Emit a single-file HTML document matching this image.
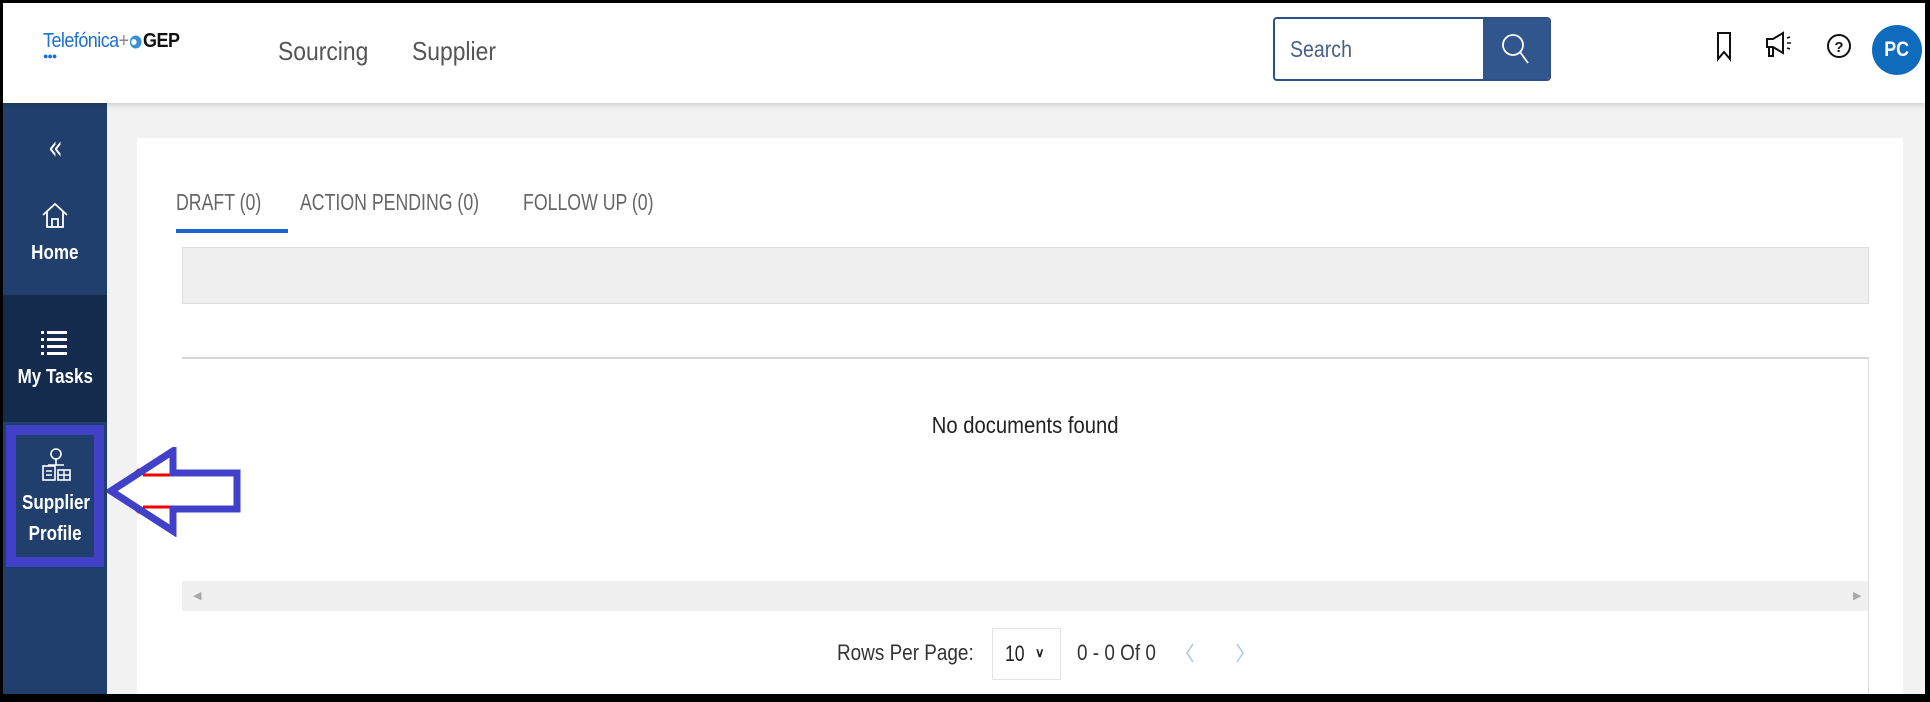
<!DOCTYPE html>
<html><head><meta charset="utf-8"><style>
*{margin:0;padding:0;box-sizing:border-box}
body{width:1930px;height:702px;overflow:hidden;background:#000;font-family:"Liberation Sans",sans-serif;position:relative}
.frame{position:absolute;left:3px;top:3px;width:1922px;height:691px;background:#f2f2f2;overflow:hidden}
.hdr{position:absolute;left:0;top:0;width:100%;height:100px;background:#fff;box-shadow:0 2px 5px rgba(0,0,0,.15);z-index:2}
.abs{position:absolute}
.n{display:inline-block;transform:scaleX(.8);transform-origin:left center;white-space:nowrap}
.nc{display:inline-block;transform:scaleX(.85);transform-origin:center center;white-space:nowrap}
.side{position:absolute;left:0;top:100px;width:104px;height:591px;background:#203f6c}
.card{position:absolute;left:134px;top:135px;width:1766px;height:556px;background:#fff}
</style></head><body><div class="frame">
<div class="hdr">
 <div class="abs" style="left:40px;top:27px;font-size:20px;color:#1d6fd1;letter-spacing:-0.6px"><span class="n" style="transform:scaleX(.9)">Telefónica<span style="color:#888">+</span><svg width="16" height="15" style="vertical-align:-2px"><circle cx="8" cy="8" r="6.5" fill="#3a8fd6"/><circle cx="6" cy="8" r="3" fill="#fff"/></svg><b style="color:#111">GEP</b></span></div>
 <div class="abs" style="left:40px;top:48px;font-size:9px;color:#1d6fd1;letter-spacing:-1px">●●●</div>
 <div class="abs" style="left:275px;top:33px;font-size:26px;color:#555"><span class="n" style="transform:scaleX(.88)">Sourcing</span></div>
 <div class="abs" style="left:409px;top:33px;font-size:26px;color:#555"><span class="n" style="transform:scaleX(.88)">Supplier</span></div>
 <div class="abs" style="left:1270px;top:14px;width:278px;height:64px;border:2px solid #2f5085;border-radius:4px;background:#fff;overflow:hidden">
  <div class="abs" style="left:15px;top:17px;font-size:23px;color:#4a5f86"><span class="n" style="transform:scaleX(.85)">Search</span></div>
  <div class="abs" style="right:0;top:0;width:66px;height:62px;background:#31568e">
   <svg width="66" height="62"><circle cx="30" cy="26" r="10" fill="none" stroke="#fff" stroke-width="1.8"/><line x1="37" y1="33" x2="45" y2="44" stroke="#fff" stroke-width="1.8"/></svg>
  </div>
 </div>
 <svg class="abs" style="left:1705px;top:25px" width="30" height="36"><path d="M10 5 h12 v26 l-6 -7 l-6 7 z" fill="none" stroke="#111" stroke-width="2"/></svg>
 <svg class="abs" style="left:1758px;top:25px" width="36" height="36"><path d="M6 11 h6 l10 -6 v20 l-10 -6 h-6 z M8 19 v9 h4 v-9" fill="none" stroke="#111" stroke-width="2"/><path d="M26 10 l3 -1 M26 15 h4 M26 20 l3 1" stroke="#111" stroke-width="1.6"/></svg>
 <svg class="abs" style="left:1822px;top:29px" width="30" height="30"><circle cx="14" cy="14" r="11" fill="none" stroke="#111" stroke-width="2"/><text x="14" y="20" text-anchor="middle" font-family="Liberation Sans" font-weight="bold" font-size="15" fill="#111">?</text></svg>
 <div class="abs" style="left:1869px;top:22px;width:50px;height:50px;border-radius:50%;background:#0f6cbd;color:#fff;font-weight:bold;font-size:21px;line-height:50px;text-align:center"><span class="nc">PC</span></div>
</div>
<div class="side">
 <div class="abs" style="left:0;width:104px;text-align:center;top:25px;font-size:34px;color:#fff;font-family:'DejaVu Sans'"><span class="nc" style="transform:scaleX(.7)">«</span></div>
 <svg class="abs" style="left:37px;top:98px" width="30" height="30"><path d="M3 14 L15 3 L27 14 M7 11 v15 h16 v-15 M12 26 v-8 h6 v8" fill="none" stroke="#fff" stroke-width="1.8"/></svg>
 <div class="abs" style="left:0;width:104px;top:139px;text-align:center;color:#fff;font-size:20px;font-weight:bold"><span class="nc">Home</span></div>
 <div class="abs" style="left:0;top:192px;width:104px;height:127px;background:#152b4d">
  <svg class="abs" style="left:38px;top:34px" width="30" height="26"><g fill="#fff"><rect x="0" y="2" width="3" height="3"/><rect x="6" y="2" width="20" height="3"/><rect x="0" y="9" width="3" height="3"/><rect x="6" y="9" width="20" height="3"/><rect x="0" y="16" width="3" height="3"/><rect x="6" y="16" width="20" height="3"/><rect x="0" y="23" width="3" height="3"/><rect x="6" y="23" width="20" height="3"/></g></svg>
  <div class="abs" style="left:0;width:104px;top:71px;text-align:center;color:#fff;font-size:20px;font-weight:bold"><span class="nc">My Tasks</span></div>
 </div>
 <div class="abs" style="left:3px;top:322px;width:98px;height:142px;border:10px solid #4040c8;background:#203f6c">
  <svg class="abs" style="left:24px;top:12px" width="34" height="36"><circle cx="16" cy="7" r="5" fill="none" stroke="#fff" stroke-width="1.6"/><path d="M8 18 h16 M16 12 v6" stroke="#fff" stroke-width="1.6"/><rect x="3" y="19" width="12" height="14" fill="none" stroke="#fff" stroke-width="1.6"/><path d="M6 24 h6 M6 28 h6" stroke="#fff" stroke-width="1.4"/><rect x="18" y="23" width="12" height="10" fill="none" stroke="#fff" stroke-width="1.6"/><path d="M24 23 v10 M18 28 h12" stroke="#fff" stroke-width="1.4"/></svg>
  <div class="abs" style="left:0;width:78px;top:53px;text-align:center;color:#fff;font-size:20px;font-weight:bold;line-height:31px"><span class="nc">Supplier</span><br><span class="nc">Profile</span></div>
 </div>
</div>
<div class="card">
 <div class="abs" style="left:39px;top:51px;font-size:23px;color:#666"><span class="n" style="transform:scaleX(.77)">DRAFT (0)</span></div>
 <div class="abs" style="left:163px;top:51px;font-size:23px;color:#666"><span class="n" style="transform:scaleX(.77)">ACTION PENDING (0)</span></div>
 <div class="abs" style="left:386px;top:51px;font-size:23px;color:#666"><span class="n" style="transform:scaleX(.77)">FOLLOW UP (0)</span></div>
 <div class="abs" style="left:39px;top:91px;width:112px;height:4px;background:#1e62d0"></div>
 <div class="abs" style="left:45px;top:109px;width:1687px;height:57px;background:#efefef;border:1px solid #ddd"></div>
 <div class="abs" style="left:45px;top:219px;width:1687px;height:400px;border-top:2px solid #d6d6d6;border-right:1px solid #ddd"></div>
 <div class="abs" style="left:45px;top:274px;width:1687px;text-align:center;font-size:23px;color:#222"><span class="nc" style="transform:scaleX(.88)">No documents found</span></div>
 <div class="abs" style="left:45px;top:443px;width:1686px;height:30px;background:#f0f0f0"></div>
 <div class="abs" style="left:56px;top:451px;font-size:11px;color:#aaa">◀</div>
 <div class="abs" style="left:1716px;top:451px;font-size:11px;color:#aaa">▶</div>
 <div class="abs" style="left:700px;top:502px;font-size:22px;color:#333"><span class="n" style="transform:scaleX(.86)">Rows Per Page:</span></div>
 <div class="abs" style="left:855px;top:490px;width:69px;height:52px;border:1px solid #e4e4e4;font-size:22px;color:#222;padding:12px 0 0 12px"><span class="n">10</span><span style="position:absolute;left:42px;top:16px;font-size:13px;font-weight:bold">∨</span></div>
 <div class="abs" style="left:940px;top:502px;font-size:22px;color:#333"><span class="n" style="transform:scaleX(.86)">0 - 0 Of 0</span></div>
 <svg class="abs" style="left:1046px;top:502px" width="70" height="26"><path d="M10 4 l-6 9 l6 9 M54 4 l6 9 l-6 9" fill="none" stroke="#a8c8ec" stroke-width="1.5"/></svg>
</div>
<svg class="abs" style="left:104px;top:444px;z-index:3" width="140" height="90"><path d="M4 44 L66 4 L66 26 L130 26 L130 62 L66 62 L66 84 Z" fill="#fff" stroke="#4040c8" stroke-width="7"/><path d="M36 28 h28 M36 60 h28" stroke="#e00" stroke-width="3"/><path d="M32 22 L12 40 M32 66 L12 48" stroke="#e00" stroke-width="2"/><path d="M4 44 L66 4 L66 26 L130 26 L130 62 L66 62 L66 84 Z" fill="none" stroke="#4040c8" stroke-width="7"/></svg>
</div></body></html>
